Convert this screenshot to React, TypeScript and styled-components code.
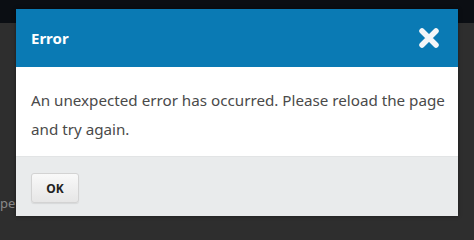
import styled, { createGlobalStyle } from "styled-components";

const GlobalStyle = createGlobalStyle`
  html, body {
    margin: 0;
    padding: 0;
    background: #2e2e2e;
    font-family: "Noto Sans", "Open Sans", sans-serif;
  }
`;

const Page = styled.div`
  position: relative;
  width: 474px;
  height: 233px;
  overflow: hidden;
  background: #2e2e2e;
`;

const TopBar = styled.div`
  height: 23px;
  background: #0b0e13;
`;

const PageText = styled.p`
  margin: 172px 0 0 0;
  font-size: 13px;
  line-height: 16px;
  color: #8a8a8a;
`;

const Modal = styled.div`
  position: absolute;
  top: 9px;
  left: 16px;
  width: 442px;
  display: flex;
  flex-direction: column;
  box-shadow: 0 0 4px rgba(0, 0, 0, 0.4);
`;

const Header = styled.div`
  height: 58px;
  display: flex;
  align-items: center;
  justify-content: space-between;
  padding: 0 18px 0 15px;
  background: #0a7ab4;
  color: #fff;
`;

const Title = styled.h1`
  margin: 0;
  font-size: 15px;
  font-weight: 700;
  line-height: 1;
`;

const CloseButton = styled.button`
  display: flex;
  padding: 0;
  border: 0;
  background: none;
  cursor: pointer;
`;

const Body = styled.div`
  height: 89px;
  box-sizing: border-box;
  padding: 19px 4px 0 15px;
  background: #fff;
  color: #4a4a4a;
  font-size: 15.2px;
  line-height: 29px;
`;

const Footer = styled.div`
  height: 60px;
  box-sizing: border-box;
  padding: 16px 15px 0;
  background: #e9ebec;
  border-top: 1px solid #e2e4e5;
`;

const Button = styled.button`
  width: 48px;
  height: 30px;
  padding: 0;
  font-family: inherit;
  font-size: 12px;
  font-weight: 700;
  color: #222;
  background: linear-gradient(#f9f9f9, #e6e6e6);
  border: 1px solid #d3d3d3;
  border-radius: 3px;
  box-shadow: 0 1px 1px rgba(0, 0, 0, 0.08);
`;

function CloseIcon() {
  return (
    <svg width="22" height="22" viewBox="0 0 22 22">
      <path
        d="M4 4 L18 18 M18 4 L4 18"
        stroke="#f4f6f8"
        strokeWidth="5.5"
        strokeLinecap="round"
      />
    </svg>
  );
}

export default function App() {
  return (
    <Page>
      <GlobalStyle />
      <TopBar />
      <PageText>pe</PageText>
      <Modal>
        <Header>
          <Title>Error</Title>
          <CloseButton aria-label="Close">
            <CloseIcon />
          </CloseButton>
        </Header>
        <Body>
          An unexpected error has occurred. Please reload the page and try again.
        </Body>
        <Footer>
          <Button>OK</Button>
        </Footer>
      </Modal>
    </Page>
  );
}
